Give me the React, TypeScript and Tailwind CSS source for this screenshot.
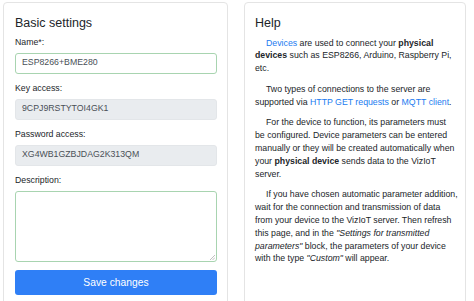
import React from "react";

const font = { fontFamily: '"Liberation Sans", Arial, Helvetica, sans-serif' };

function Label({ children }: { children: React.ReactNode }) {
  return <div className="text-[8.75px] leading-[13px] text-[#212529] mb-[3.5px]">{children}</div>;
}

export default function App() {
  return (
    <div className="w-[474px] h-[301px] overflow-hidden bg-white flex items-start gap-[16px] pl-[3px] pt-[2px]" style={font}>
      <div className="w-[225px] border border-[#e4e4e4] rounded-[4px] pl-[11px] pr-[10px] pt-[13px] pb-[12px] shrink-0">
        <div className="text-[12.5px] leading-[15px] text-[#212529] mb-[5px]">Basic settings</div>
        <div className="mb-[8.5px]">
          <Label>Name*:</Label>
          <div className="h-[21px] border border-[#a8d4b0] rounded-[3px] bg-white px-[6px] flex items-center text-[8.75px] text-[#495057]">ESP8266+BME280</div>
        </div>
        <div className="mb-[8.5px]">
          <Label>Key access:</Label>
          <div className="h-[21px] border border-[#e3e6e9] rounded-[3px] bg-[#e9ecef] px-[6px] flex items-center text-[8.75px] text-[#495057]">9CPJ9RSTYTOI4GK1</div>
        </div>
        <div className="mb-[8.5px]">
          <Label>Password access:</Label>
          <div className="h-[21px] border border-[#e3e6e9] rounded-[3px] bg-[#e9ecef] px-[6px] flex items-center text-[8.75px] text-[#495057]">XG4WB1GZBJDAG2K313QM</div>
        </div>
        <div className="mb-[8.5px]">
          <Label>Description:</Label>
          <div className="relative h-[71px] border border-[#a8d4b0] rounded-[3px] bg-white">
            <svg className="absolute right-[1px] bottom-[1px]" width="5" height="5" viewBox="0 0 5 5">
              <path d="M5 0 L0 5 M5 2.5 L2.5 5" stroke="#b0b0b0" strokeWidth="0.8" />
            </svg>
          </div>
        </div>
        <div className="h-[25px] rounded-[3px] bg-[#2f7ff6] flex items-center justify-center text-white text-[10.3px]">Save changes</div>
      </div>
      <div className="w-[222px] self-stretch h-[320px] border border-[#e4e4e4] rounded-[4px] pl-[10px] pr-[5px] pt-[13px] shrink-0 text-[8.75px] leading-[12.8px] text-[#212529]">
        <div className="text-[12.5px] leading-[15px] text-[#212529] mb-[5.5px]">Help</div>
        <p className="indent-[11px] mb-[8px]">
          <span className="text-[#1a7bf0]">Devices</span> are used to connect your <b>physical devices</b> such as ESP8266, Arduino, Raspberry Pi, etc.
        </p>
        <p className="indent-[11px] mb-[8px]">
          Two types of connections to the server are supported via <span className="text-[#1a7bf0]">HTTP GET requests</span> or <span className="text-[#1a7bf0]">MQTT client</span>.
        </p>
        <p className="indent-[11px] mb-[8px] mr-[3px]">
          For the device to function, its parameters must be configured. Device parameters can be entered manually or they will be created automatically when your <b>physical device</b> sends data to the VizIoT server.
        </p>
        <p className="indent-[11px] mb-[8px]">
          If you have chosen automatic parameter addition, wait for the connection and transmission of data from your device to the VizIoT server. Then refresh this page, and in the <i>"Settings for transmitted parameters"</i> block, the parameters of your device with the type <i>"Custom"</i> will appear.
        </p>
      </div>
    </div>
  );
}
